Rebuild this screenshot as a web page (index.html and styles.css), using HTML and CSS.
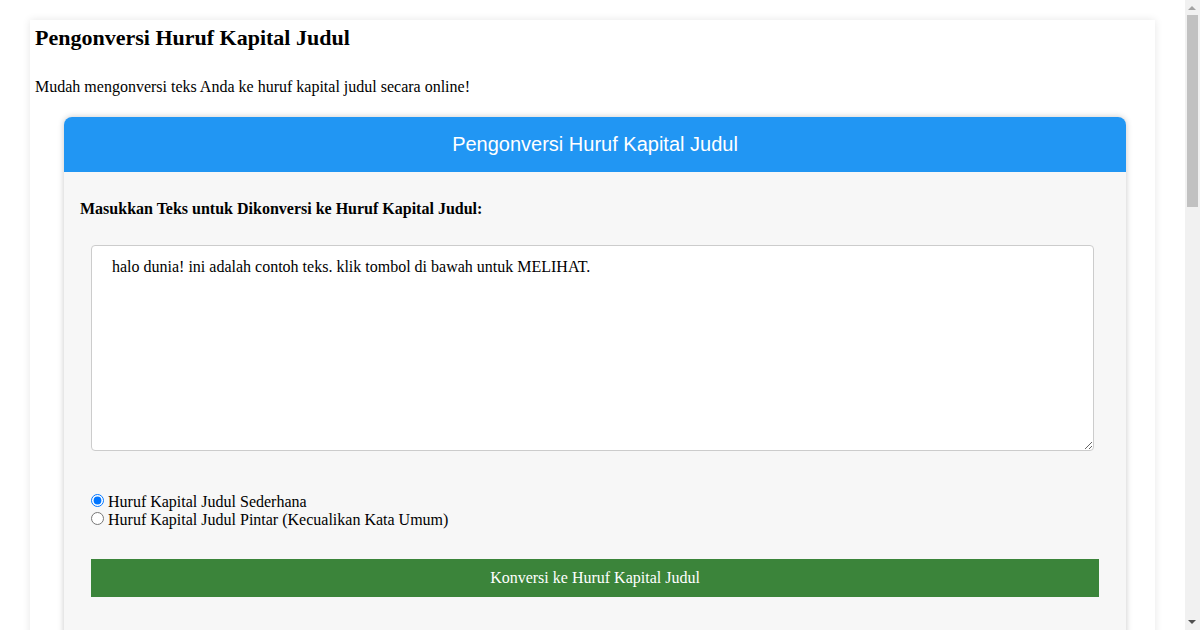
FILE: index.html
```html
<!DOCTYPE html>
<html lang="id">
<head>
<meta charset="utf-8">
<title>Pengonversi Huruf Kapital Judul</title>
<link rel="stylesheet" href="styles.css">
</head>
<body>
<div class="page">
  <h1 class="page-title">Pengonversi Huruf Kapital Judul</h1>
  <p class="intro">Mudah mengonversi teks Anda ke huruf kapital judul secara online!</p>

  <div class="card">
    <div class="card-header">Pengonversi Huruf Kapital Judul</div>
    <div class="card-body">
      <label class="field-label" for="input">Masukkan Teks untuk Dikonversi ke Huruf Kapital Judul:</label>
      <div class="form">
        <textarea id="input" class="text-input">halo dunia! ini adalah contoh teks. klik tombol di bawah untuk MELIHAT.</textarea>
        <div class="options">
          <label class="option"><input type="radio" name="mode" checked>Huruf Kapital Judul Sederhana</label>
          <label class="option"><input type="radio" name="mode">Huruf Kapital Judul Pintar (Kecualikan Kata Umum)</label>
        </div>
        <button class="convert-btn" type="button">Konversi ke Huruf Kapital Judul</button>
      </div>
      <label class="field-label result-label" for="output">Hasil:</label>
      <div class="form">
        <textarea id="output" class="text-input" readonly></textarea>
        <button class="convert-btn copy-btn" type="button">Salin ke Papan Klip</button>
      </div>
    </div>
  </div>

  <div class="info">
    <h2>Apa itu Huruf Kapital Judul?</h2>
    <p>Huruf kapital judul adalah gaya penulisan di mana huruf pertama dari setiap kata penting dalam judul ditulis dengan huruf kapital. Gaya ini umum digunakan untuk judul buku, artikel, film, lagu, dan berbagai jenis karya lainnya.</p>
    <p>Pengonversi ini membantu Anda mengubah teks apa pun menjadi format huruf kapital judul dengan cepat, tanpa perlu mengedit setiap kata secara manual.</p>
    <h2>Cara Menggunakan</h2>
    <ol>
      <li>Ketik atau tempel teks Anda ke dalam kotak di atas.</li>
      <li>Pilih mode konversi: sederhana atau pintar.</li>
      <li>Klik tombol "Konversi ke Huruf Kapital Judul".</li>
      <li>Salin hasilnya dan gunakan di mana saja.</li>
    </ol>
    <h2>Perbedaan Mode</h2>
    <ul>
      <li><strong>Sederhana:</strong> setiap kata diawali dengan huruf kapital.</li>
      <li><strong>Pintar:</strong> kata umum seperti "dan", "di", "ke", "dari", "yang" tetap ditulis dengan huruf kecil, kecuali di awal judul.</li>
    </ul>
    <h2>Contoh</h2>
    <p>Masukan: halo dunia! ini adalah contoh teks.</p>
    <p>Sederhana: Halo Dunia! Ini Adalah Contoh Teks.</p>
    <p>Pintar: Halo Dunia! Ini Adalah Contoh Teks.</p>
    <h2>Pertanyaan Umum</h2>
    <h3>Apakah alat ini gratis?</h3>
    <p>Ya, alat ini sepenuhnya gratis dan dapat digunakan tanpa batas.</p>
    <h3>Apakah teks saya disimpan?</h3>
    <p>Tidak. Semua proses konversi dilakukan langsung di peramban Anda.</p>
    <h3>Bisakah saya mengonversi teks panjang?</h3>
    <p>Tentu. Anda dapat menempelkan paragraf atau dokumen panjang sekaligus.</p>
    <p class="footer">&copy; 2024 Pengonversi Huruf Kapital Judul. Semua hak dilindungi.</p>
  </div>
</div>

<div class="scrollbar" aria-hidden="true">
  <div class="sb-arrow sb-up"></div>
  <div class="sb-track"><div class="sb-thumb"></div></div>
  <div class="sb-arrow sb-down"></div>
</div>
</body>
</html>
```
FILE: styles.css
```css
html, body {
  margin: 0;
  padding: 0;
  background: #ffffff;
}

body {
  font-family: "Liberation Serif", "Times New Roman", serif;
  font-size: 16px;
  color: #000000;
}

.page {
  width: 1125px;
  margin: 20px 0 20px 30px;
  padding: 5px 5px 20px;
  box-sizing: border-box;
  background: #ffffff;
  box-shadow: 0 0 8px rgba(0, 0, 0, 0.1);
}

.page-title {
  font-size: 22px;
  font-weight: bold;
  margin: 0 0 27px;
}

.intro {
  margin: 0;
}

.card {
  width: 1062px;
  margin: 21px 0 0 29px;
  border-radius: 8px;
  overflow: hidden;
  background: #f7f7f7;
  box-shadow: 0 0 6px rgba(0, 0, 0, 0.22);
}

.card-header {
  background: #2196f3;
  color: #ffffff;
  font-family: "Liberation Sans", Arial, sans-serif;
  font-size: 20px;
  line-height: 23px;
  padding: 16px;
  text-align: center;
}

.card-body {
  padding: 28px 16px 30px;
}

.field-label {
  display: block;
  font-weight: bold;
  margin: 0 0 27px;
}

.result-label {
  margin-top: 32px;
}

.form {
  padding: 0 11px;
}

.text-input {
  display: block;
  width: calc(100% - 5px);
  height: 206px;
  box-sizing: border-box;
  margin: 0;
  padding: 12px 20px;
  border: 1px solid #cccccc;
  border-radius: 4px;
  background: #ffffff;
  font-family: "Liberation Serif", "Times New Roman", serif;
  font-size: 16px;
  color: #000000;
}

.options {
  margin-top: 42px;
}

.option {
  display: block;
  line-height: 18px;
}

.option input {
  margin: 0 4px 0 0;
  width: 13px;
  height: 13px;
  vertical-align: baseline;
}

.convert-btn {
  display: block;
  width: 100%;
  margin-top: 30px;
  height: 38px;
  padding: 0;
  border: none;
  border-radius: 0;
  background: #3b843a;
  color: #ffffff;
  font-family: "Liberation Serif", "Times New Roman", serif;
  font-size: 16px;
  cursor: pointer;
}

.copy-btn {
  margin-top: 20px;
}

.info {
  padding: 10px 29px;
}

.info h2 {
  font-size: 20px;
  margin: 28px 0 12px;
}

.info h3 {
  font-size: 17px;
  margin: 20px 0 8px;
}

.info p {
  margin: 0 0 14px;
  line-height: 1.5;
}

.info li {
  line-height: 1.6;
}

.footer {
  margin-top: 40px;
  text-align: center;
  color: #555555;
}

/* browser scrollbar as seen in the reference */
.scrollbar {
  position: fixed;
  top: 0;
  right: 0;
  width: 15px;
  height: 100vh;
  background: #f1f1f1;
  display: flex;
  flex-direction: column;
}

.sb-arrow {
  height: 15px;
  flex: none;
  position: relative;
}

.sb-arrow::after {
  content: "";
  position: absolute;
  left: 3px;
  border-left: 4px solid transparent;
  border-right: 4px solid transparent;
}

.sb-up::after {
  top: 6px;
  border-bottom: 4px solid #a3a3a3;
}

.sb-down::after {
  top: 5px;
  border-top: 4px solid #505050;
}

.sb-track {
  flex: 1;
  padding: 0 2px;
}

.sb-thumb {
  height: 192px;
  background: #c1c1c1;
}
```
